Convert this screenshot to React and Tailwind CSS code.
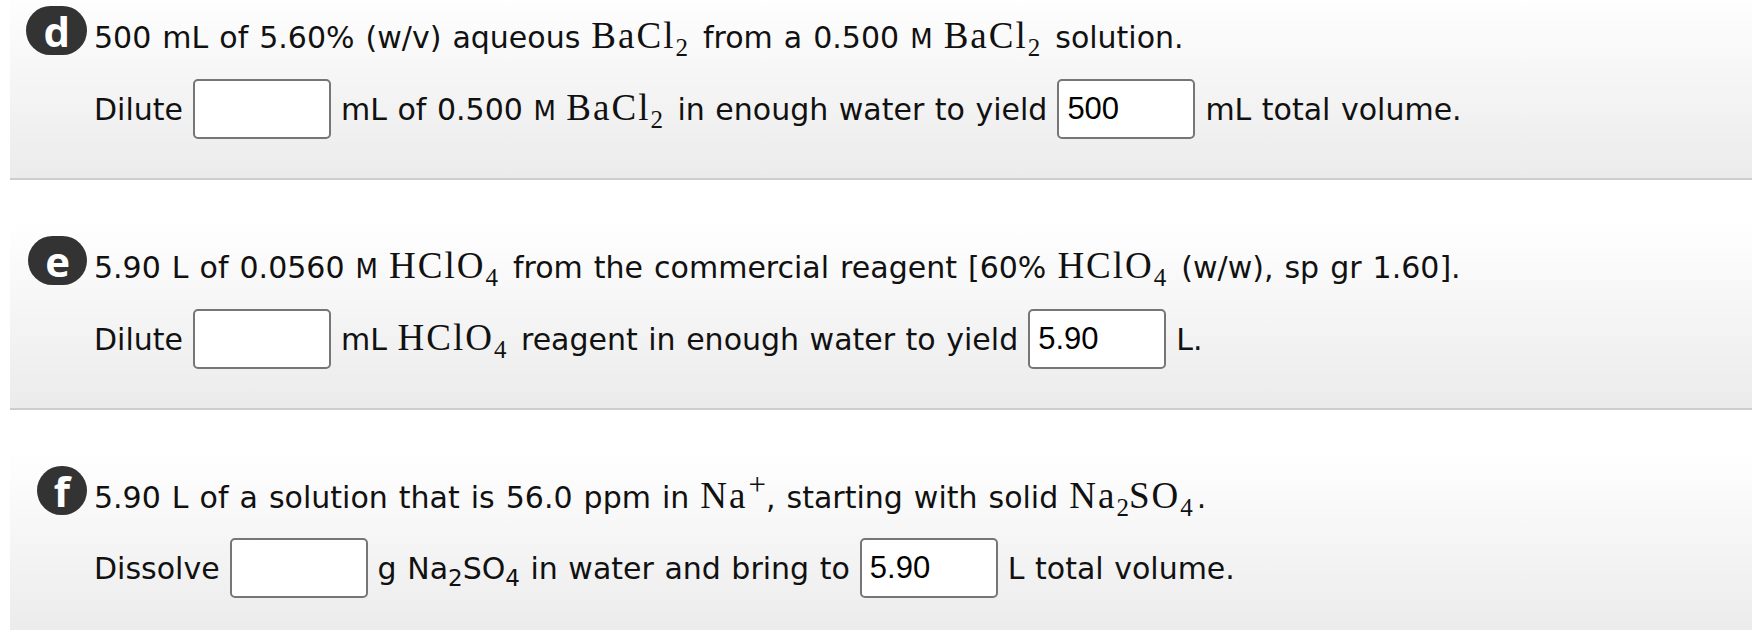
import React from "react";

function M({ children, after = true }) {
  return (
    <span
      className={
        after
          ? "font-['Liberation_Serif',serif] text-[37px] tracking-[2px] leading-[0] mr-[4px]"
          : "font-['Liberation_Serif',serif] text-[37px] tracking-[2px] leading-[0]"
      }
    >
      {children}
    </span>
  );
}

function Sub({ children }) {
  return (
    <span className="relative top-[8px] text-[25px] tracking-normal leading-[0]">
      {children}
    </span>
  );
}

function Sup({ children }) {
  return (
    <span className="relative top-[-13px] text-[31px] tracking-normal leading-[0] ml-[1px]">
      {children}
    </span>
  );
}

function HSub({ children }) {
  return <span className="relative top-[7px] text-[23px] leading-[0]">{children}</span>;
}

function Molar() {
  return <span className="text-[26px]">M</span>;
}

function Box({ value }) {
  return (
    <input
      readOnly
      defaultValue={value}
      className="w-[138px] h-[60px] shrink-0 border-2 border-[#767676] rounded-[5px] bg-white px-[8px] font-['Liberation_Sans',Arial,sans-serif] text-[31px] text-black outline-none"
    />
  );
}

function Section({ first, letter, line1, line2 }) {
  return (
    <div
      className={
        first
          ? "-mt-[9px] bg-linear-to-b from-white to-[#ebebeb] border-b-2 border-[#cdcdcd] pt-[15px] pb-[39px]"
          : "mt-[41px] bg-linear-to-b from-white to-[#ebebeb] border-b-2 border-[#cdcdcd] pt-[15px] pb-[39px]"
      }
    >
      <div className="flex items-start">
        <div className="w-[77px] flex justify-end">
          <span className="h-[49px] px-[17px] rounded-full bg-[#333333] text-white font-['Open_Sans',sans-serif] font-bold text-[42px] leading-none flex items-center">
            {letter}
          </span>
        </div>
        <div className="ml-[7px] pt-[14px] leading-[36px] whitespace-nowrap [word-spacing:1.5px]">
          {line1}
        </div>
      </div>
      <div className="mt-[22px] pl-[84px] h-[60px] flex items-center gap-[10px] whitespace-nowrap [word-spacing:1px]">
        {line2}
      </div>
    </div>
  );
}

export default function App() {
  return (
    <div className="w-[1752px] h-[630px] overflow-hidden bg-white pl-[10px] font-['DejaVu_Sans',Verdana,sans-serif] text-[30px] text-[#111111]">
      <Section
        first
        letter="d"
        line1={
          <>
            500 mL of 5.60% (w/v) aqueous{" "}
            <M>
              BaCl<Sub>2</Sub>
            </M>{" "}
            from a 0.500 <Molar />{" "}
            <M>
              BaCl<Sub>2</Sub>
            </M>{" "}
            solution.
          </>
        }
        line2={
          <>
            <span>Dilute</span>
            <Box value="" />
            <span>
              mL of 0.500 <Molar />{" "}
              <M>
                BaCl<Sub>2</Sub>
              </M>{" "}
              in enough water to yield
            </span>
            <Box value="500" />
            <span>mL total volume.</span>
          </>
        }
      />
      <Section
        letter="e"
        line1={
          <>
            5.90 L of 0.0560 <Molar />{" "}
            <M>
              HClO<Sub>4</Sub>
            </M>{" "}
            from the commercial reagent [60%{" "}
            <M>
              HClO<Sub>4</Sub>
            </M>{" "}
            (w/w), sp gr 1.60].
          </>
        }
        line2={
          <>
            <span>Dilute</span>
            <Box value="" />
            <span>
              mL{" "}
              <M>
                HClO<Sub>4</Sub>
              </M>{" "}
              reagent in enough water to yield
            </span>
            <Box value="5.90" />
            <span>L.</span>
          </>
        }
      />
      <Section
        letter="f"
        line1={
          <>
            5.90 L of a solution that is 56.0 ppm in{" "}
            <M after={false}>
              Na<Sup>+</Sup>
            </M>
            , starting with solid{" "}
            <M>
              Na<Sub>2</Sub>SO<Sub>4</Sub>
            </M>
            .
          </>
        }
        line2={
          <>
            <span>Dissolve</span>
            <Box value="" />
            <span>
              g Na<HSub>2</HSub>SO<HSub>4</HSub> in water and bring to
            </span>
            <Box value="5.90" />
            <span>L total volume.</span>
          </>
        }
      />
    </div>
  );
}
